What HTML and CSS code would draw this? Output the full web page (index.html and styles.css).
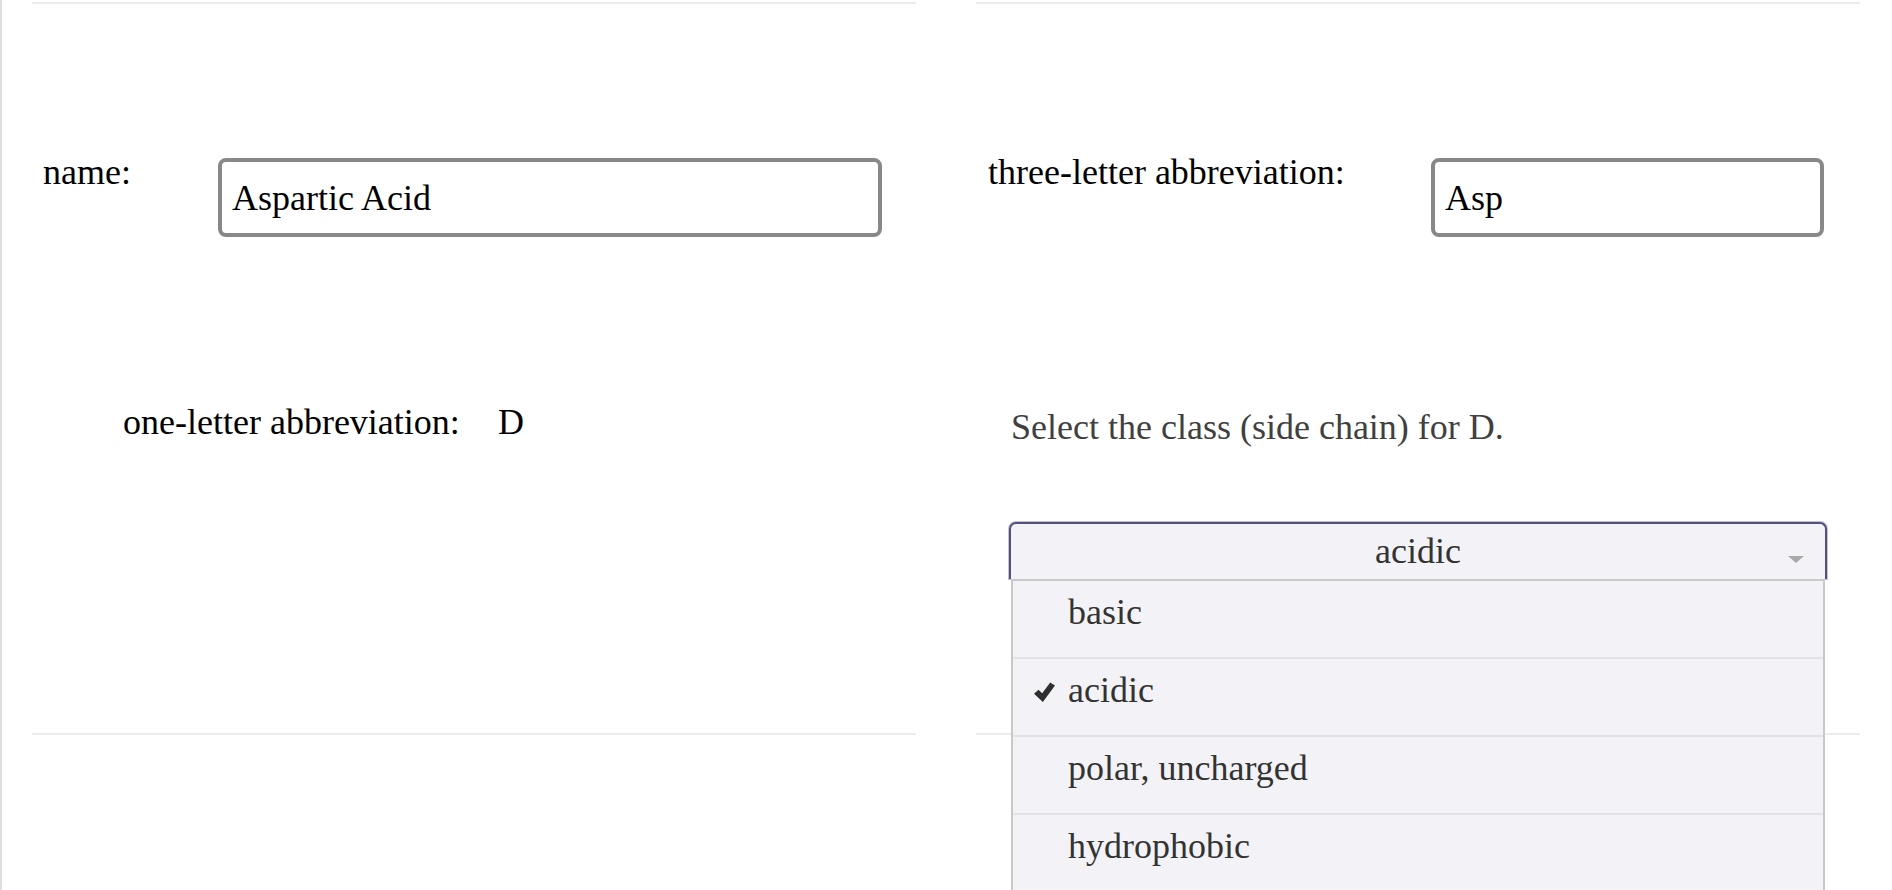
FILE: index.html
```html
<!DOCTYPE html>
<html lang="en">
<head>
<meta charset="utf-8">
<title>Amino acid</title>
<link rel="stylesheet" href="styles.css">
</head>
<body>
<div class="page">
  <div class="grid">
    <section class="cell cell-left">
      <div class="field">
        <label class="field-label">name:</label>
        <div class="field-control"><input class="text-input" type="text" value="Aspartic Acid"></div>
      </div>
      <div class="inline-field">
        <span class="inline-label">one-letter abbreviation:</span>
        <span class="inline-value">D</span>
      </div>
    </section>
    <section class="cell cell-right">
      <div class="field">
        <label class="field-label">three-letter abbreviation:</label>
        <div class="field-control"><input class="text-input" type="text" value="Asp"></div>
      </div>
      <div class="question">
        <p class="prompt">Select the class (side chain) for D.</p>
        <div class="dropdown">
          <div class="dropdown-header">
            <span></span>
            <span class="dropdown-value">acidic</span>
            <span class="arrow"></span>
          </div>
          <ul class="dropdown-menu">
            <li class="option first"><span class="check"></span><span>basic</span></li>
            <li class="option selected"><span class="check"><svg width="21" height="20" viewBox="0 0 18 19" preserveAspectRatio="none"><path d="M0 11.2 L3.9 7.3 L7 10.6 L13.9 0.4 L18 3.4 L7.6 19 Z" fill="#2f2f2f"/></svg></span><span>acidic</span></li>
            <li class="option"><span class="check"></span><span>polar, uncharged</span></li>
            <li class="option"><span class="check"></span><span>hydrophobic</span></li>
          </ul>
        </div>
      </div>
    </section>
    <section class="cell"></section>
    <section class="cell"></section>
  </div>
</div>
</body>
</html>
```
FILE: styles.css
```css
html, body {
  margin: 0;
  padding: 0;
  background: #fff;
  overflow: hidden;
}

body {
  font-family: "Liberation Serif", "Times New Roman", serif;
  font-size: 36px;
  line-height: 41px;
  color: #000;
}

.page {
  height: 890px;
  box-sizing: border-box;
  border-left: 2px solid #dedede;
  padding: 2px 32px 0 30px;
}

.grid {
  display: grid;
  grid-template-columns: 1fr 1fr;
  column-gap: 60px;
  grid-auto-rows: 731px;
}

.cell {
  border-top: 2px solid #ececec;
  box-sizing: border-box;
  padding-top: 146px;
}

.field {
  display: flex;
  align-items: flex-start;
}

.field-label {
  box-sizing: border-box;
  flex: none;
  padding-top: 2px;
}

.field-control {
  padding-top: 8px;
  flex: none;
}

.cell-left .field-label {
  width: 186px;
  padding-left: 11px;
}

.cell-left .field-control {
  width: 664px;
}

.cell-right .field-label {
  width: 455px;
  padding-left: 12px;
}

.cell-right .field-control {
  width: 393px;
}

.text-input {
  display: block;
  width: 100%;
  height: 79px;
  box-sizing: border-box;
  border: 4px solid #888888;
  border-radius: 8px;
  padding: 0 10px;
  margin: 0;
  font-family: inherit;
  font-size: 36px;
  color: #000;
  background: #fff;
  outline: none;
}

.inline-field {
  display: flex;
  margin-top: 165px;
  padding-left: 91px;
}

.inline-label {
  width: 375px;
  flex: none;
}

.question {
  margin-top: 170px;
  padding: 0 33px;
}

.prompt {
  margin: 0 0 74px;
  padding-left: 2px;
  color: #404040;
}

.dropdown {
  position: relative;
}

.dropdown-header {
  display: grid;
  grid-template-columns: 1fr auto 1fr;
  align-items: center;
  height: 57px;
  box-sizing: border-box;
  border: 2px solid #534f7e;
  border-bottom: 0;
  border-radius: 7px 7px 0 0;
  background: #f3f3f7;
  color: #333;
  line-height: 55px;
  box-shadow: 0 0 0 1px rgba(83, 79, 126, 0.35);
}

.arrow {
  justify-self: end;
  width: 0;
  height: 0;
  margin-right: 21px;
  margin-top: 16px;
  border-left: 8px solid transparent;
  border-right: 8px solid transparent;
  border-top: 7px solid #a9a9a9;
}

.dropdown-menu {
  position: absolute;
  top: 100%;
  left: 2px;
  right: 2px;
  margin: 0;
  padding: 0;
  list-style: none;
  background: #f3f3f7;
  border: 2px solid #c9c9c9;
  border-bottom: 0;
  z-index: 2;
}

.option {
  display: flex;
  align-items: flex-start;
  height: 78px;
  box-sizing: border-box;
  border-top: 2px solid #e2e2e7;
  padding: 11px 0 0 21px;
  color: #333;
}

.option.first {
  border-top: 0;
  height: 76px;
}

.check {
  width: 34px;
  flex: none;
}

.check svg {
  display: block;
  margin-top: 12px;
}
```
